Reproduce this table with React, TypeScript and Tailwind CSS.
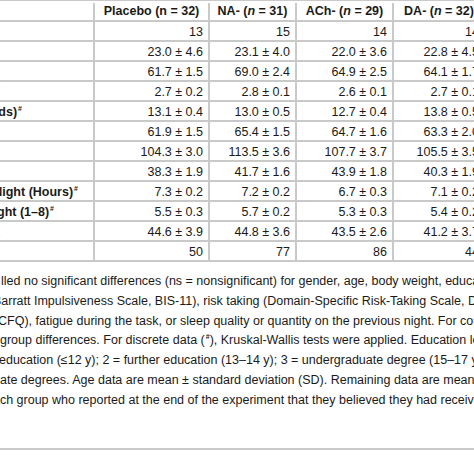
import React from "react";

type Row = { label: string; pr: string; hash: boolean; v: [string, string, string, string] };

const rows: Row[] = [
  { label: "Gender (female)", pr: "pr-[93px]", hash: false, v: ["13", "15", "14", "14"] },
  { label: "Age (years)", pr: "pr-[93px]", hash: false, v: ["23.0 ± 4.6", "23.1 ± 4.0", "22.0 ± 3.6", "22.8 ± 4.5"] },
  { label: "Body weight (kg)", pr: "pr-[93px]", hash: false, v: ["61.7 ± 1.5", "69.0 ± 2.4", "64.9 ± 2.5", "64.1 ± 1.7"] },
  { label: "Education level (1–4)", pr: "pr-[93px]", hash: true, v: ["2.7 ± 0.2", "2.8 ± 0.1", "2.6 ± 0.1", "2.7 ± 0.1"] },
  { label: "Fatigue (task periods)", pr: "pr-[71px]", hash: true, v: ["13.1 ± 0.4", "13.0 ± 0.5", "12.7 ± 0.4", "13.8 ± 0.5"] },
  { label: "Impulsivity (BIS-11)", pr: "pr-[93px]", hash: false, v: ["61.9 ± 1.5", "65.4 ± 1.5", "64.7 ± 1.6", "63.3 ± 2.0"] },
  { label: "Risk taking (DOSPERT)", pr: "pr-[93px]", hash: false, v: ["104.3 ± 3.0", "113.5 ± 3.6", "107.7 ± 3.7", "105.5 ± 3.5"] },
  { label: "Cognitive failures (CFQ)", pr: "pr-[93px]", hash: false, v: ["38.3 ± 1.9", "41.7 ± 1.6", "43.9 ± 1.8", "40.3 ± 1.9"] },
  { label: "Sleep Previous Night (Hours)", pr: "pr-[15px]", hash: true, v: ["7.3 ± 0.2", "7.2 ± 0.2", "6.7 ± 0.3", "7.1 ± 0.2"] },
  { label: "Sleep Quality Previous Night (1–8)", pr: "pr-[39px]", hash: true, v: ["5.5 ± 0.3", "5.7 ± 0.2", "5.3 ± 0.3", "5.4 ± 0.2"] },
  { label: "Fatigue during task", pr: "pr-[93px]", hash: false, v: ["44.6 ± 3.9", "44.8 ± 3.6", "43.5 ± 2.6", "41.2 ± 3.7"] },
  { label: "Believed drug (%)", pr: "pr-[93px]", hash: false, v: ["50", "77", "86", "44"] },
];

const Hash = () => (
  <span className="relative top-[-5px] ml-[1px] text-[7px] font-bold leading-none">#</span>
);

export default function App() {
  return (
    <div
      className="w-[474px] h-[474px] overflow-hidden bg-white text-[#1a1a1a]"
      style={{ fontFamily: '"Liberation Sans", Arial, Helvetica, sans-serif' }}
    >
      <div className="w-[600px]">
        {/* header */}
        <div className="flex h-[22px] pt-[2px] border-t border-b-2 border-[#c9c9c9] text-[12.5px] font-bold leading-none">
          <div className="w-[95px] shrink-0 border-r-2 border-[#c9c9c9]" />
          <div className="w-[115px] shrink-0 border-r-2 border-[#c9c9c9] flex items-center justify-center">
            Placebo (n = 32)
          </div>
          <div className="w-[87px] shrink-0 border-r-2 border-[#c9c9c9] flex items-center justify-center">
            <span>
              NA- (<i>n</i> = 31)
            </span>
          </div>
          <div className="w-[97px] shrink-0 border-r-2 border-[#c9c9c9] flex items-center justify-center">
            <span>
              ACh- (<i>n</i> = 29)
            </span>
          </div>
          <div className="w-[90px] shrink-0 flex items-center justify-center">
            <span>
              DA- (<i>n</i> = 32)
            </span>
          </div>
        </div>
        {rows.map((r, i) => (
          <div key={i} className="flex h-[20px] border-b-2 border-[#c9c9c9] text-[12.5px] leading-none">
            <div
              className={`w-[95px] shrink-0 pt-[2px] border-r-2 border-[#c9c9c9] overflow-hidden flex items-center justify-end whitespace-nowrap font-bold ${r.pr}`}
            >
              <span className="shrink-0">
                {r.label}
                {r.hash && <Hash />}
              </span>
            </div>
            <div className="w-[115px] shrink-0 pt-[2px] border-r-2 border-[#c9c9c9] flex items-center justify-end pr-[5px] whitespace-nowrap">
              {r.v[0]}
            </div>
            <div className="w-[87px] shrink-0 pt-[2px] border-r-2 border-[#c9c9c9] flex items-center justify-end pr-[5px] whitespace-nowrap">
              {r.v[1]}
            </div>
            <div className="w-[97px] shrink-0 pt-[2px] border-r-2 border-[#c9c9c9] flex items-center justify-end pr-[5px] whitespace-nowrap">
              {r.v[2]}
            </div>
            <div className="w-[90px] shrink-0 pt-[2px] flex items-center justify-end pr-[5px] whitespace-nowrap">
              {r.v[3]}
            </div>
          </div>
        ))}
        {/* footnote */}
        <div className="mt-[10px] text-[12.5px] leading-[19.8px] whitespace-nowrap">
          <div className="ml-[1px]">
            lled no significant differences (ns = nonsignificant) for gender, age, body weight, education level,
          </div>
          <div className="ml-[-7px]">
            Barratt Impulsiveness Scale, BIS-11), risk taking (Domain-Specific Risk-Taking Scale, DOSPERT),
          </div>
          <div className="ml-[-2px]">
            CFQ), fatigue during the task, or sleep quality or quantity on the previous night. For continuous data,
          </div>
          <div className="ml-[0px]">
            group differences. For discrete data (<Hash />), Kruskal-Wallis tests were applied. Education level:
          </div>
          <div className="ml-[-1px]">
            education (≤12 y); 2 = further education (13–14 y); 3 = undergraduate degree (15–17 y);
          </div>
          <div className="ml-[0px]">
            ate degrees. Age data are mean ± standard deviation (SD). Remaining data are mean ± SEM.
          </div>
          <div className="ml-[-14px]">
            each group who reported at the end of the experiment that they believed they had received the drug.
          </div>
        </div>
        <div className="mt-[37px] w-[474px] border-t-2 border-[#c9c9c9]" />
      </div>
    </div>
  );
}
